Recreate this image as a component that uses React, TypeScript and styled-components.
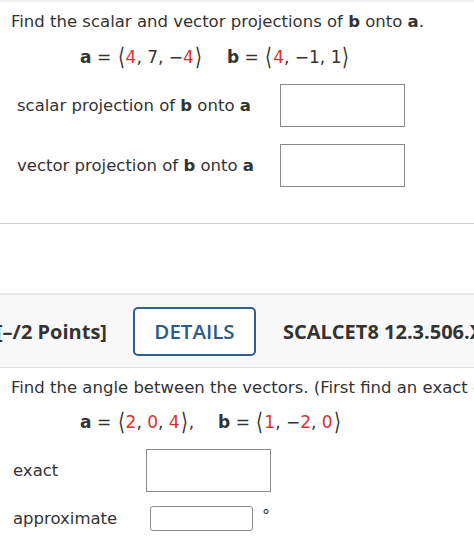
import styled, { createGlobalStyle } from 'styled-components';

const GlobalStyle = createGlobalStyle`
  html, body {
    margin: 0;
    padding: 0;
    background: #fff;
  }
  body {
    font-family: "DejaVu Sans", Verdana, sans-serif;
    color: #333;
  }
`;

const Page = styled.div`
  width: 474px;
  height: 558px;
  overflow: hidden;
  background: #fff;
  border-top: 2px solid #f0f0f0;
  box-sizing: border-box;
`;

const Question = styled.section`
  padding: 10px 0 0 11px;
  font-size: 16.5px;
  white-space: nowrap;
`;

const Prompt = styled.div`
  line-height: 20px;
`;

const MathLine = styled.div<{ $top: number }>`
  display: flex;
  align-items: center;
  gap: 24px;
  padding-left: 69px;
  margin-top: ${(p) => p.$top}px;
  line-height: 24px;
  font-size: 17px;
`;

const Vec = styled.span`
  white-space: pre;
`;

const Red = styled.span`
  color: #d8322c;
`;

const Bracket = styled.span`
  display: inline-block;
  font-weight: 300;
  font-size: 18px;
  transform: scaleY(1.35);
  margin: 0 1px;
`;

const AnswerGrid = styled.div<{ $label: number; $top: number; $gap: number; $left: number }>`
  display: grid;
  grid-template-columns: ${(p) => p.$label}px auto;
  row-gap: ${(p) => p.$gap}px;
  align-items: center;
  margin-top: ${(p) => p.$top}px;
  margin-left: ${(p) => p.$left}px;
`;

const Label = styled.div`
  font-size: 16.5px;
`;

const Box = styled.div<{ $w: number; $h: number; $round?: boolean }>`
  width: ${(p) => p.$w}px;
  height: ${(p) => p.$h}px;
  box-sizing: border-box;
  border: 1px solid #8a8a8a;
  border-radius: ${(p) => (p.$round ? '3px' : '0')};
  background: #fff;
`;

const Degree = styled.span`
  display: flex;
  align-items: flex-start;
  gap: 9px;
  font-size: 16px;
  padding-left: 4px;
`;

const Divider = styled.hr`
  margin: 36px 0 0;
  border: 0;
  border-top: 1px solid #cfcfcf;
  height: 0;
`;

const Header = styled.header`
  margin-top: 69px;
  height: 75px;
  box-sizing: border-box;
  background: #f8f8f8;
  border-top: 2px solid #e6e6e6;
  border-bottom: 1px solid #e2e2e2;
  display: flex;
  align-items: center;
  font-family: "Open Sans", sans-serif;
  font-weight: 700;
  font-size: 20px;
  white-space: nowrap;
  color: #333;
`;

const Points = styled.span`
  flex-shrink: 0;
  margin-left: -4px;
  width: 137px;
`;

const DetailsButton = styled.button`
  flex-shrink: 0;
  width: 123px;
  height: 49px;
  box-sizing: border-box;
  border: 2px solid #2e5f8e;
  border-radius: 5px;
  background: #fff;
  color: #2c5b8a;
  font-family: "Open Sans", sans-serif;
  font-weight: 600;
  font-size: 20.5px;
  padding: 0;
  margin-right: 27px;
`;

const Code = styled.span`
  flex-shrink: 0;
`;

export default function App() {
  return (
    <>
      <GlobalStyle />
      <Page>
        <Question>
          <Prompt>
            Find the scalar and vector projections of <b>b</b> onto <b>a</b>.
          </Prompt>
          <MathLine $top={13}>
            <Vec>
              <b>a</b> = <Bracket>⟨</Bracket><Red>4</Red>, 7, −<Red>4</Red><Bracket>⟩</Bracket>
            </Vec>
            <Vec>
              <b>b</b> = <Bracket>⟨</Bracket><Red>4</Red>, −1, 1<Bracket>⟩</Bracket>
            </Vec>
          </MathLine>
          <AnswerGrid $label={263} $top={15} $gap={17} $left={6}>
            <Label>
              scalar projection of <b>b</b> onto <b>a</b>
            </Label>
            <Box $w={125} $h={43} />
            <Label>
              vector projection of <b>b</b> onto <b>a</b>
            </Label>
            <Box $w={125} $h={43} />
          </AnswerGrid>
        </Question>
        <Divider />
        <Header>
          <Points>[–/2 Points]</Points>
          <DetailsButton>DETAILS</DetailsButton>
          <Code>SCALCET8 12.3.506.XP.</Code>
        </Header>
        <Question>
          <Prompt>Find the angle between the vectors. (First find an exact expression.)</Prompt>
          <MathLine $top={12}>
            <Vec>
              <b>a</b> = <Bracket>⟨</Bracket><Red>2</Red>, <Red>0</Red>, <Red>4</Red><Bracket>⟩</Bracket>,
            </Vec>
            <Vec>
              <b>b</b> = <Bracket>⟨</Bracket><Red>1</Red>, −<Red>2</Red>, <Red>0</Red><Bracket>⟩</Bracket>
            </Vec>
          </MathLine>
          <AnswerGrid $label={133} $top={15} $gap={14} $left={2}>
            <Label>exact</Label>
            <Box $w={125} $h={43} />
            <Label>approximate</Label>
            <Degree>
              <Box $w={103} $h={25} $round />
              °
            </Degree>
          </AnswerGrid>
        </Question>
      </Page>
    </>
  );
}
